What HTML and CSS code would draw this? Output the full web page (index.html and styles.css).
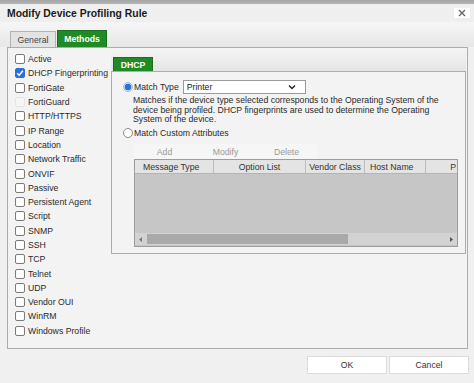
FILE: index.html
```html
<!DOCTYPE html>
<html>
<head>
<meta charset="utf-8">
<link rel="stylesheet" href="styles.css">
</head>
<body>
<div class="dialog">
  <div class="strip"></div>
  <div class="titlebar">
    <span class="title">Modify Device Profiling Rule</span>
    <span class="close"><svg width="8" height="8" viewBox="0 0 8 8"><path d="M1 1L7 7M7 1L1 7" stroke="#666" stroke-width="1.4"/></svg></span>
  </div>
  <div class="tabbar">
    <div class="tab">General</div>
    <div class="tab active">Methods</div>
  </div>
  <div class="panel">
    <ul class="methods">
      <li><span class="cb"></span>Active</li>
      <li><span class="cb checked"><svg width="10" height="10" viewBox="0 0 10 10"><path d="M2.2 5.2L4.2 7.2L7.9 2.8" fill="none" stroke="#fff" stroke-width="1.5"/></svg></span>DHCP Fingerprinting</li>
      <li><span class="cb"></span>FortiGate</li>
      <li class="disabled"><span class="cb"></span>FortiGuard</li>
      <li><span class="cb"></span>HTTP/HTTPS</li>
      <li><span class="cb"></span>IP Range</li>
      <li><span class="cb"></span>Location</li>
      <li><span class="cb"></span>Network Traffic</li>
      <li><span class="cb"></span>ONVIF</li>
      <li><span class="cb"></span>Passive</li>
      <li><span class="cb"></span>Persistent Agent</li>
      <li><span class="cb"></span>Script</li>
      <li><span class="cb"></span>SNMP</li>
      <li><span class="cb"></span>SSH</li>
      <li><span class="cb"></span>TCP</li>
      <li><span class="cb"></span>Telnet</li>
      <li><span class="cb"></span>UDP</li>
      <li><span class="cb"></span>Vendor OUI</li>
      <li><span class="cb"></span>WinRM</li>
      <li><span class="cb"></span>Windows Profile</li>
    </ul>
    <div class="detail">
      <div class="subtabs"><div class="subtab">DHCP</div></div>
      <div class="subpanel">
        <div class="radio-row">
          <span class="radio on"></span>Match Type
          <span class="select">Printer<svg width="8" height="6" viewBox="0 0 8 6"><path d="M1 1.5L4 4.5L7 1.5" fill="none" stroke="#222" stroke-width="1.4"/></svg></span>
        </div>
        <p class="desc">Matches if the device type selected corresponds to the Operating System of the<br>device being profiled. DHCP fingerprints are used to determine the Operating<br>System of the device.</p>
        <div class="radio-row second"><span class="radio"></span>Match Custom Attributes</div>
        <div class="toolbar">
          <span class="tbtn">Add</span>
          <span class="tbtn">Modify</span>
          <span class="tbtn">Delete</span>
        </div>
        <div class="grid">
          <div class="grid-head">
            <span class="col c1">Message Type</span>
            <span class="col c2">Option List</span>
            <span class="col c3">Vendor Class</span>
            <span class="col c4">Host Name</span>
            <span class="col c5">P</span>
          </div>
          <div class="grid-body"></div>
          <div class="hscroll">
            <span class="arrow"><svg width="4" height="5" viewBox="0 0 4 5"><path d="M3 0L0 2.5L3 5Z" fill="#777"/></svg></span>
            <div class="track"><div class="thumb"></div></div>
            <span class="arrow"><svg width="4" height="5" viewBox="0 0 4 5"><path d="M1 0L4 2.5L1 5Z" fill="#555"/></svg></span>
          </div>
        </div>
      </div>
    </div>
  </div>
  <div class="footer">
    <span class="btn">OK</span>
    <span class="btn">Cancel</span>
  </div>
</div>
</body>
</html>
```
FILE: styles.css
```css
* { box-sizing: border-box; }
html, body { margin: 0; padding: 0; }
body {
  width: 474px;
  height: 383px;
  overflow: hidden;
  background: #f0f0f0;
  font-family: "Liberation Sans", Arial, sans-serif;
  font-size: 8.7px;
  color: #2a2a2a;
}
.dialog { width: 474px; height: 383px; display: flex; flex-direction: column; }
.strip { height: 4px; background: linear-gradient(#a4a4a4, #b4b4b4); }
.titlebar {
  height: 18px;
  display: flex;
  align-items: center;
  justify-content: space-between;
  padding: 0 4px 0 7px;
  background: #efefef;
}
.title { font-size: 10.4px; font-weight: bold; color: #1a1a1a; }
.close {
  width: 16px; height: 10px;
  background: #fff;
  display: flex; align-items: center; justify-content: center;
}
.tabbar {
  height: 25px;
  display: flex;
  align-items: flex-end;
  gap: 1px;
  padding-left: 10px;
  background: linear-gradient(#f6f6f6, #e7e7e7);
}
.tab {
  width: 46px; height: 16px;
  border: 1px solid #b2b2b2;
  border-bottom: none;
  background: #e3e3e3;
  display: flex; align-items: center; justify-content: center;
  color: #444;
}
.tab.active {
  width: 50px; height: 17px;
  background: #1f8a26;
  border-color: #17701d;
  color: #fff;
  font-weight: bold;
}
.panel {
  height: 302px;
  margin: 0 6px 0 7px;
  border: 1px solid #acacac;
  background: #f3f3f3;
  display: flex;
}
.methods {
  list-style: none;
  margin: 0;
  padding: 4px 0 0 7px;
  width: 103px;
  flex: none;
}
.methods li {
  height: 14.3px;
  display: flex;
  align-items: center;
  white-space: nowrap;
  color: #2a2a2a;
}
.cb {
  width: 10px; height: 10px;
  border: 1px solid #7a7a7a;
  border-radius: 2px;
  background: #fff;
  margin-right: 3px;
  flex: none;
  display: flex;
}
.cb.checked { background: #2b6fd8; border-color: #2b6fd8; }
.cb.checked svg { margin: -1px; }
.methods li.disabled .cb { border-color: #e4e4e4; background: #f6f6f6; }
.detail { flex: 1; display: flex; flex-direction: column; padding-right: 1px; }
.subtabs {
  height: 23px;
  padding: 9px 0 0 2px;
  background: linear-gradient(#f4f4f4, #e5e5e5);
  display: flex;
}
.subtab {
  width: 40px; height: 14px;
  background: #1f8a26;
  border: 1px solid #17701d;
  border-bottom: none;
  color: #fff;
  font-weight: bold;
  display: flex; align-items: center; justify-content: center;
}
.subpanel {
  height: 183px;
  border: 1px solid #acacac;
  background: #f3f3f3;
  padding: 8px 0 0 11px;
}
.radio-row { height: 14px; display: flex; align-items: center; color: #2a2a2a; }
.radio {
  width: 10px; height: 10px;
  border-radius: 50%;
  border: 1px solid #8a8a8a;
  background: #fff;
  margin-right: 1px;
  flex: none;
}
.radio.on {
  border-color: #9cc0ef;
  background: radial-gradient(circle, #2c72db 0, #2c72db 3.2px, #cfe1f7 3.6px);
}
.select {
  margin-left: 4px;
  width: 123px; height: 14px;
  border: 1px solid #9a9a9a;
  background: #fff;
  display: flex; align-items: center; justify-content: space-between;
  padding: 0 9px 0 3px;
  color: #222;
}
.desc {
  margin: 2px 0 0 10px;
  line-height: 9.7px;
  color: #2a2a2a;
  white-space: nowrap;
}
.radio-row.second { margin-top: 1px; }
.toolbar { display: flex; margin: 4px 0 0 11px; height: 15px; }
.tbtn {
  width: 61px; height: 15px;
  display: flex; align-items: center; justify-content: center;
  color: #9a9a9a;
  background: #f6f6f6;
}
.grid {
  margin: 0 0 0 11px;
  width: 324px;
  height: 88px;
  border: 1px solid #9c9c9c;
  background: #c6c6c6;
  display: flex;
  flex-direction: column;
}
.grid-head {
  height: 14px;
  display: flex;
  background: #e4e4e4;
  border-bottom: 1px solid #b4b4b4;
  flex: none;
  overflow: hidden;
}
.col {
  height: 100%;
  display: flex; align-items: center;
  border-right: 1px solid #bcbcbc;
  color: #333;
  white-space: nowrap;
  flex: none;
}
.c1 { width: 79px; padding-left: 8px; }
.c2 { width: 92px; justify-content: center; }
.c3 { width: 59px; justify-content: center; }
.c4 { width: 61px; padding-left: 5px; }
.c5 { flex: 1; justify-content: flex-end; border-right: none; padding-right: 1px; }
.grid-body { flex: 1; }
.hscroll {
  height: 12px;
  display: flex;
  align-items: center;
  margin-bottom: 1px;
  background: #d2d2d2;
  flex: none;
}
.arrow { width: 12px; display: flex; justify-content: center; flex: none; }
.track { flex: 1; height: 10px; }
.thumb { width: 201px; height: 10px; background: #a9a9a9; }
.footer {
  display: flex;
  justify-content: flex-end;
  gap: 2px;
  padding: 7px 5px 0 0;
}
.btn {
  width: 80px; height: 18px;
  background: #fff;
  border: 1px solid #dcdcdc;
  display: flex; align-items: center; justify-content: center;
  color: #333;
}
```
